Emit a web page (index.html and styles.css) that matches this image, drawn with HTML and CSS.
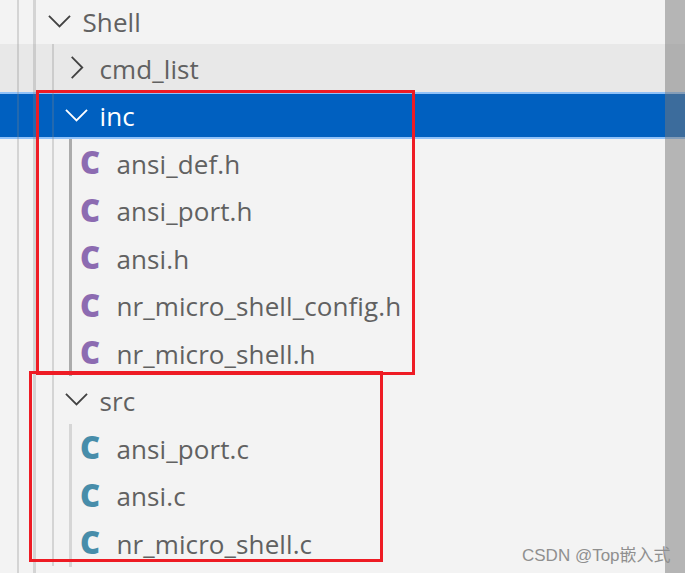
FILE: index.html
```html
<!DOCTYPE html>
<html lang="en">
<head>
<meta charset="utf-8">
<title>Explorer</title>
<link rel="stylesheet" href="styles.css">
</head>
<body>
<main class="tree">
  <div class="row first lvl1"><svg class="chev" viewBox="0 0 24 24"><path d="M1 3 12 14 23 3"/></svg><span class="name">Shell</span></div>
  <div class="row hover lvl2"><svg class="chev right" viewBox="0 0 24 24"><path d="M7 1 18 12 7 23"/></svg><span class="name">cmd_list</span></div>
  <div class="row selected lvl2"><svg class="chev" viewBox="0 0 24 24"><path d="M1 3 12 14 23 3"/></svg><span class="name">inc</span></div>
  <div class="row lvl3"><span class="ic h">C</span><span class="name">ansi_def.h</span></div>
  <div class="row lvl3"><span class="ic h">C</span><span class="name">ansi_port.h</span></div>
  <div class="row lvl3"><span class="ic h">C</span><span class="name">ansi.h</span></div>
  <div class="row lvl3"><span class="ic h">C</span><span class="name">nr_micro_shell_config.h</span></div>
  <div class="row lvl3"><span class="ic h">C</span><span class="name">nr_micro_shell.h</span></div>
  <div class="row lvl2"><svg class="chev" viewBox="0 0 24 24"><path d="M1 3 12 14 23 3"/></svg><span class="name">src</span></div>
  <div class="row lvl3"><span class="ic c">C</span><span class="name">ansi_port.c</span></div>
  <div class="row lvl3"><span class="ic c">C</span><span class="name">ansi.c</span></div>
  <div class="row lvl3"><span class="ic c">C</span><span class="name">nr_micro_shell.c</span></div>
</main>
<div class="guide g1"></div>
<div class="guide g2"></div>
<div class="guide g3"></div>
<div class="guide g4"></div>
<div class="guide g5"></div>
<div class="scrollbar"></div>
<div class="redbox inc-box"></div>
<div class="redbox src-box"></div>
<div class="watermark">CSDN @Top嵌入式</div>
</body>
</html>
```
FILE: styles.css
```css
* { box-sizing: border-box; }
html, body { margin: 0; height: 100%; }
body {
  position: relative;
  width: 685px;
  height: 573px;
  overflow: hidden;
  background: #f3f3f3;
  font-family: "Open Sans", "Noto Sans", sans-serif;
  color: #616161;
}
.tree { display: flex; flex-direction: column; }
.row {
  display: flex;
  align-items: center;
  height: 47.5px;
  flex: none;
  font-size: 26px;
  white-space: nowrap;
}
.row.first { height: 44px; }
.name { padding-top: 2px; letter-spacing: .1px; }
.first .name { padding-top: 0; }
.lvl1 { padding-left: 47.5px; }
.lvl2 { padding-left: 64.5px; }
.lvl3 { padding-left: 80px; }
.hover { background: #e8e8e8; }
.selected {
  background: #0060c0;
  color: #fff;
  border-top: 2px solid #90c2f9;
  border-bottom: 2px solid #90c2f9;
}
.chev {
  width: 23px;
  height: 23px;
  flex: none;
  margin-right: 12px;
  fill: none;
  stroke: #424242;
  stroke-width: 1.9;
  position: relative;
  top: 2px;
}
.chev.right { top: 0; }
.selected .chev { top: 3px; stroke: #fff; }
.ic {
  width: 36.5px;
  flex: none;
  font-weight: 800;
  font-size: 31px;
  line-height: 1;
}
.ic.h { color: #8c6bb1; }
.ic.c { color: #478daa; }
.guide { position: absolute; background: rgba(128, 128, 128, .27); }
.g1 { left: 17px; top: 0; bottom: 0; width: 2px; }
.g2 { left: 33px; top: 0; bottom: 0; width: 3px; }
.g3 { left: 52px; top: 44px; height: 522px; width: 2px; }
.g4 { left: 69px; top: 139px; height: 237px; width: 3px; background: #ababab; }
.g5 { left: 69px; top: 424px; height: 143px; width: 3px; background: #d6d6d6; }
.scrollbar {
  position: absolute;
  right: 0;
  top: 0;
  bottom: 0;
  width: 20px;
  background: rgba(120, 120, 120, .5);
}
.redbox { position: absolute; border: 3px solid #ee1b24; }
.inc-box { left: 36px; top: 90px; width: 379px; height: 285px; }
.src-box { left: 29px; top: 371px; width: 354px; height: 191px; }
.watermark {
  position: absolute;
  left: 522px;
  top: 541px;
  font-family: "Liberation Sans", "Noto Sans CJK SC", sans-serif;
  font-size: 17px;
  color: #8f8f8f;
  white-space: nowrap;
}
```
